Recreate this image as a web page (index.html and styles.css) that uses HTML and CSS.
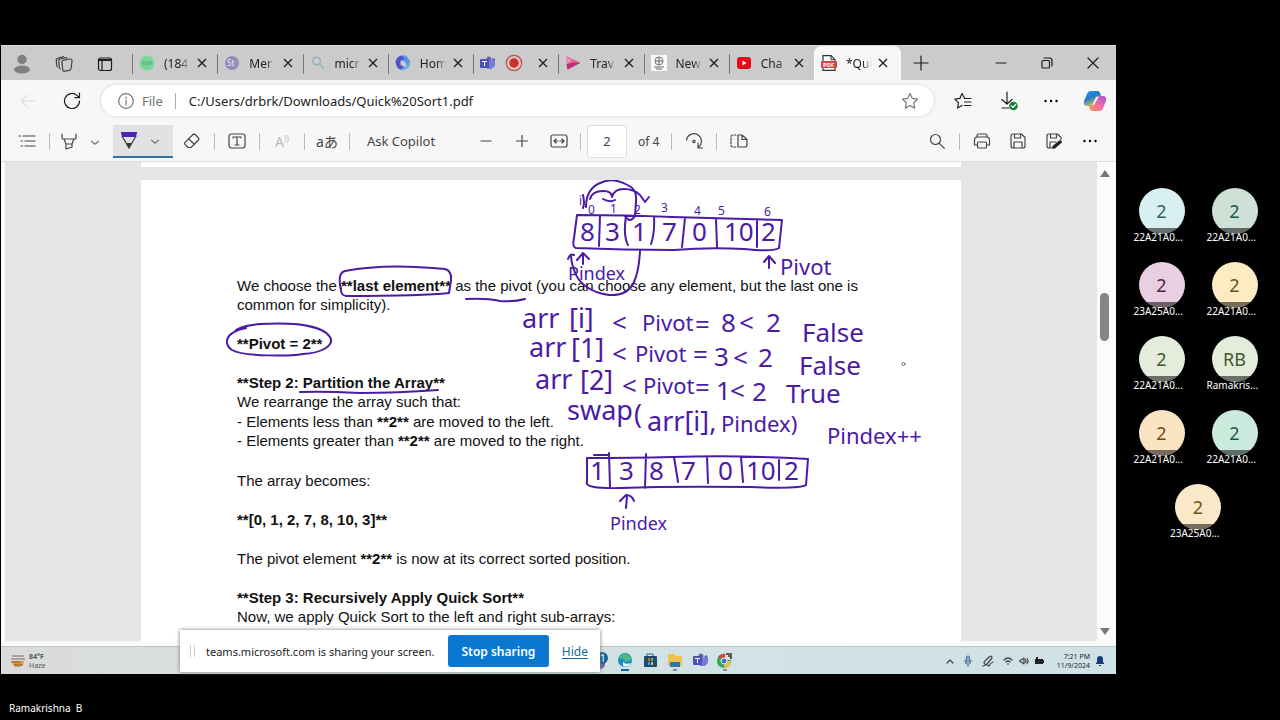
FILE: index.html
```html
<!DOCTYPE html>
<html lang="en">
<head>
<meta charset="utf-8">
<title>Quick Sort1.pdf</title>
<link rel="stylesheet" href="styles.css">
</head>
<body>
<svg class="symbols" aria-hidden="true"><symbol id="x" viewBox="0 0 10 10"><path d="m1 1 8 8M9 1 1 9"/></symbol></svg>
<div class="meeting">
<main class="browser">
  <header class="tabs">
    <div class="tabs-lead">
      <svg class="icon" width="18" height="20" viewBox="0 0 18 20"><circle cx="9" cy="5.500" r="4.700" fill="#808080"/><ellipse cx="9" cy="15.500" rx="8" ry="4" fill="#808080"/></svg>
      <svg class="icon line" width="18" height="18" viewBox="0 0 18 18"><path d="M8.500 5.200 15 4q2-.2 2 1.800l-.8 7.500q-.2 1.700-2 2l-4.500.9q-2 .3-2-1.700l-.7-7.300q0-1.700 1.500-2z"/><path d="M5.500 14q-1 0-1.200-1.500L3.800 6q-.2-2 2-2.300L12 2.600M2.500 11.800q-.8-.3-.8-1.500L1.300 5.500q-.2-2 2-2.500L8.500 1.500"/></svg>
      <svg class="icon line dark" width="16" height="16" viewBox="0 0 16 16"><rect x="1.500" y="2" width="13" height="12.500" rx="2"/><path d="M1.500 3.500h13M1.500 4.500h13M5 5v9.500"/></svg>
    </div>
    <nav class="tab-list" aria-label="Open tabs">
      <div class="tab"><svg class="fav" viewBox="0 0 16 16"><circle cx="8" cy="8" r="7.500" fill="#7bd59b"/><path d="M4 6v4m2-4v4m2-4v4m2-4v4m2-4v4" stroke="#55a977" fill="none"/></svg><span>(184</span><button aria-label="Close tab"><svg class="cross"><use href="#x"/></svg></button></div>
      <div class="tab"><svg class="fav" viewBox="0 0 16 16"><circle cx="8" cy="8" r="7" fill="#9689bd"/><text x="3" y="11" font-size="8" fill="#eee">St</text></svg><span>Mer</span><button aria-label="Close tab"><svg class="cross"><use href="#x"/></svg></button></div>
      <div class="tab"><svg class="fav" viewBox="0 0 16 16" fill="none" stroke="#8fb6bf" stroke-width="1.500"><circle cx="6.500" cy="6" r="3.800"/><path d="m9.500 9 4.500 4.500"/></svg><span>micr</span><button aria-label="Close tab"><svg class="cross"><use href="#x"/></svg></button></div>
      <div class="tab"><svg class="fav" viewBox="0 0 16 16"><path d="M6 .500h5q2 2 4 6l-3 5-2-5-5-1z" fill="#5c93e6"/><path d="M6 .500Q1 2 .500 7l1 4q2 4 6 4l2-3-4-2V6q2-2 5-2z" fill="#4f54c4"/><path d="M15 6.500q1 5-3 7-4 3-7 1l6-3 2-4z" fill="#56b6df"/></svg><span>Hom</span><button aria-label="Close tab"><svg class="cross"><use href="#x"/></svg></button></div>
      <div class="tab"><svg class="fav" viewBox="0 0 16 16"><circle cx="9" cy="4" r="2.500" fill="#6264b9"/><circle cx="13.500" cy="5" r="1.700" fill="#6264b9"/><path d="M7 6h8v5l-2 2-2 1H7z" fill="#777add"/><rect y="4" width="9" height="9" rx="1" fill="#4b51b5"/><path d="M2 6.500h5M4.500 6.500V11" stroke="#fff" fill="none"/></svg><svg class="record" viewBox="0 0 18 18"><circle cx="9" cy="9" r="7.700" fill="none" stroke="#d14a40" stroke-width="1.300"/><circle cx="9" cy="9" r="4.700" fill="#cd3025"/></svg><button aria-label="Close tab"><svg class="cross"><use href="#x"/></svg></button></div>
      <div class="tab"><svg class="fav" viewBox="0 0 16 16"><path d="M1 2q0-1 2 0l11 5q2 1 0 2L2 10z" fill="#e0608f"/><path d="M1 2l6 3-5 5z" fill="#e991b4"/><path d="M1.500 9 10 7.500l5 .5-11 6q-2 1-2-1z" fill="#c02f79"/></svg><span>Trav</span><button aria-label="Close tab"><svg class="cross"><use href="#x"/></svg></button></div>
      <div class="tab"><svg class="fav" viewBox="0 0 16 16"><path d="M0 0h16v16H0z" fill="#f8f8f8"/><circle cx="8" cy="6" r="4" fill="none" stroke="#777"/><path d="M4 6h8M8 2v8M3 12h10M5 14h6" stroke="#666" fill="none"/></svg><span>New</span><button aria-label="Close tab"><svg class="cross"><use href="#x"/></svg></button></div>
      <div class="tab"><svg class="fav" viewBox="0 0 16 16"><rect x="1" y="2" width="14" height="12" rx="3" fill="#e90819"/><path d="m6.500 5.500 4 2.500-4 2.500z" fill="#fff"/></svg><span>Cha</span><button aria-label="Close tab"><svg class="cross"><use href="#x"/></svg></button></div>
    </nav>
    <div class="tab active"><svg class="fav" viewBox="0 0 16 16"><path d="M2 .7h8l4 4v10.600H2z" fill="#fff" stroke="#333" stroke-width="1.200"/><path d="M10 .7v4h4" fill="none" stroke="#333"/><rect y="6" width="16" height="7" rx="1" fill="#d84343"/><text x="2" y="11.500" font-size="6" font-weight="700" fill="#fff">PDF</text></svg><span>*Qui</span><button aria-label="Close tab"><svg class="cross"><use href="#x"/></svg></button></div>
    <button class="new-tab" aria-label="New tab"><svg class="icon line dark" width="16" height="16" viewBox="0 0 16 16"><path d="M8 1v14M1 8h14"/></svg></button>
    <div class="window-controls">
      <button aria-label="Minimize"><svg class="icon line dark" width="12" height="12" viewBox="0 0 12 12"><path d="M1 6h10"/></svg></button>
      <button aria-label="Restore"><svg class="icon line dark" width="12" height="12" viewBox="0 0 12 12"><rect x="1" y="3.500" width="7.500" height="7.500" rx="1"/><path d="M3 1h5.500q2.500 0 2.500 2.500V9"/></svg></button>
      <button aria-label="Close"><svg class="icon line dark" width="12" height="12" viewBox="0 0 12 12"><path d="m1 1 10 10M11 1 1 11"/></svg></button>
    </div>
  </header>

  <div class="address-row">
    <button class="back" aria-label="Back"><svg class="icon line faint" width="16" height="14" viewBox="0 0 16 14"><path d="M15 7H2m5-6L1.500 7 7 13"/></svg></button>
    <button class="refresh" aria-label="Refresh"><svg class="icon line dark" width="18" height="18" viewBox="0 0 18 18"><path d="M16.500 9A7.500 7.500 0 1 1 14 3.400l2.500 2.300M16.500 1v4.700H12"/></svg></button>
    <div class="address">
      <svg class="icon line mid" width="16" height="16" viewBox="0 0 16 16"><circle cx="8" cy="8" r="7.300"/><path d="M8 7v5M8 4v1.300"/></svg>
      <label for="url">File</label>
      <input id="url" type="text" value="C:/Users/drbrk/Downloads/Quick%20Sort1.pdf">
      <button aria-label="Add to favorites"><svg class="icon line mid" width="18" height="18" viewBox="0 0 18 18"><path d="m9 1.500 2.300 4.900 5.300.7-3.900 3.700 1 5.300L9 13.500l-4.700 2.600 1-5.300-3.900-3.700 5.300-.7z"/></svg></button>
    </div>
    <button class="fav-list" aria-label="Favorites"><svg class="icon line dark" width="18" height="18" viewBox="0 0 18 18"><path d="M10.500 6 8 1.500 5.800 6.400.8 7.100l3.700 3.700-1 5.300L8 13.500M10.500 6.500H17M10.500 10H17M10.500 13.500H17"/></svg></button>
    <button class="download" aria-label="Downloads"><svg class="icon line dark" width="18" height="20" viewBox="0 0 18 20"><path d="M7 1v12M2 8.500 7 13l5-4.500M2 17h7"/><circle cx="13.500" cy="15" r="4.300" fill="#17803d" stroke="none"/><path d="m11.500 15 1.500 1.500 2.700-3" stroke="#fff"/></svg></button>
    <button class="menu" aria-label="Settings and more"><svg class="icon" width="16" height="6" viewBox="0 0 16 6"><circle cx="2.500" cy="3" r="1.200"/><circle cx="8" cy="3" r="1.200"/><circle cx="13.500" cy="3" r="1.200"/></svg></button>
    <button class="copilot" aria-label="Copilot"><svg class="icon" width="24" height="22" viewBox="0 0 24 22"><defs><linearGradient id="cool" x2=".5" y2="1"><stop stop-color="#169bd7"/><stop offset=".5" stop-color="#2679cc"/><stop offset="1" stop-color="#c5d54c"/></linearGradient><linearGradient id="warm" x1="1" x2="0" y2="1"><stop stop-color="#9b59de"/><stop offset=".5" stop-color="#f06ba5"/><stop offset="1" stop-color="#f69a4d"/></linearGradient></defs><path d="M8 1h7q2 0 3 5l-5 1-4 9H4q-4 0-3-5l3-7q1-3 4-3z" fill="url(#cool)"/><path d="M16 6h4q4 0 3 5l-3 7q-1 3-4 3H9q-2 0-3-5l5-1z" fill="url(#warm)"/></svg></button>
  </div>

  <div class="toolbar" role="toolbar" aria-label="PDF tools">
    <button class="w44 contents" aria-label="Contents"><svg class="icon line" width="18" height="14" viewBox="0 0 18 14"><path d="M5 2h12M7 7h10M7 12h10M1 2h1.500M3 7h1.500M3 12h1.500"/></svg></button>
    <i class="sep"></i>
    <button class="w38" aria-label="Highlight"><svg class="icon line" width="16" height="18" viewBox="0 0 16 18"><path d="M1 2v4q0 1 1 1h12q1 0 1-1V2M3 7l2 5h6l2-5M5 12v5l6-2v-3"/></svg></button>
    <button class="chevron solo" aria-label="Highlight options"><svg class="icon line mid" width="8" height="6" viewBox="0 0 8 6"><path d="m.5 1.200 3.500 3 3.500-3"/></svg></button>
    <div class="draw-group">
      <button aria-label="Draw"><svg class="icon" width="18" height="18" viewBox="0 0 18 18"><path d="M1 2h16M2 5l7 12 7-12" fill="none" stroke="#444" stroke-width="1.300"/><path d="M1 1h16l-1 5H2z" fill="#5520b5"/><path d="m6.500 12 2.500 5 2.500-5z" fill="#333"/></svg></button>
      <button class="chevron" aria-label="Draw options"><svg class="icon line mid" width="8" height="6" viewBox="0 0 8 6"><path d="m.5 1.200 3.500 3 3.500-3"/></svg></button>
    </div>
    <button class="w38 erase" aria-label="Erase"><svg class="icon line" width="18" height="18" viewBox="0 0 18 18"><path d="M10 2.500q1-1 2 0L15.500 6q1 1 0 2L8 15.500H5L2 12.300q-1-1 0-2zM5.500 6.800l6 5.500M5 15.500h3"/></svg></button>
    <i class="sep"></i>
    <button class="w44" aria-label="Add text"><svg class="icon line" width="18" height="16" viewBox="0 0 18 16"><rect x="1" y="1" width="16" height="14" rx="2.500"/><path d="M5 5V4h8v1M9 4v8M7 12h4"/></svg></button>
    <i class="sep"></i>
    <button class="w44 disabled-text" aria-label="Read aloud">A<sup>))</sup></button>
    <i class="sep"></i>
    <button class="w44 translate" aria-label="Translate">aあ</button>
    <i class="sep"></i>
    <button class="ask">Ask Copilot</button>
    <button class="w40" aria-label="Zoom out"><svg class="icon line" width="12" height="12" viewBox="0 0 12 12"><path d="M1 6h10"/></svg></button>
    <button class="w32" aria-label="Zoom in"><svg class="icon line" width="12" height="12" viewBox="0 0 12 12"><path d="M0 6h12M6 0v12"/></svg></button>
    <button class="w42" aria-label="Fit to width"><svg class="icon line" width="18" height="14" viewBox="0 0 18 14"><rect x="1" y="1" width="16" height="12" rx="2"/><path d="M4 7h4M10 7h4M6 5 4 7l2 2M12 5l2 2-2 2"/></svg></button>
    <i class="sep"></i>
    <input id="page" class="page-number" type="text" value="2">
    <label class="page-total" for="page">of 4</label>
    <i class="sep"></i>
    <button class="w44" aria-label="Rotate"><svg class="icon line" width="18" height="18" viewBox="0 0 18 18"><path d="M1.500 8a7.500 7.500 0 1 1 11.500 7.500M13 11v5h4.500"/><circle cx="9" cy="9.500" r="1.200"/></svg></button>
    <i class="sep"></i>
    <button class="w44" aria-label="Page view"><svg class="icon line" width="18" height="14" viewBox="0 0 18 14"><path d="M6 1H3q-2 0-2 2v8q0 2 2 2h3" stroke-dasharray="2 1.500"/><path d="M8 1h4l5 4.500V11q0 2-2 2H8zM12 1v4.500h5"/></svg></button>
    <span class="spacer"></span>
    <button class="w44" aria-label="Search"><svg class="icon line" width="16" height="16" viewBox="0 0 16 16"><circle cx="6.500" cy="6.500" r="5"/><path d="m10.300 10.300 5 5"/></svg></button>
    <i class="sep"></i>
    <button class="w44" aria-label="Print"><svg class="icon line" width="18" height="16" viewBox="0 0 18 16"><path d="M4 4V3q0-2 2-2h6q2 0 2 2v1M4 12H1.500V7q0-3 3-3h9q3 0 3 3v5H14"/><rect x="4.500" y="9" width="9" height="6" rx="1"/></svg></button>
    <button class="w28" aria-label="Save"><svg class="icon line" width="16" height="16" viewBox="0 0 16 16"><path d="M3 1h8.500L15 4.500V13q0 2-2 2H3q-2 0-2-2V3q0-2 2-2zM4.500 1v4h6V1M4 15V9h8v6"/></svg></button>
    <button class="w44" aria-label="Save as"><svg class="icon line" width="16" height="16" viewBox="0 0 16 16"><path d="M7 15H3q-2 0-2-2V3q0-2 2-2h8.500L15 4.500V7M4.500 1v4h6V1M4 15V9h6"/><path d="m8 14 6-5" stroke="#222" stroke-width="3.500"/></svg></button>
    <button class="w28 more" aria-label="More"><svg class="icon" width="16" height="6" viewBox="0 0 16 6"><circle cx="2.500" cy="3" r="1.200"/><circle cx="8" cy="3" r="1.200"/><circle cx="13.500" cy="3" r="1.200"/></svg></button>
  </div>

  <section class="viewer">
    <div class="canvas">
      <div class="previous-page"></div>
      <article class="page">
        <p>We choose the <b>**last element**</b> as the pivot (you can choose any element, but the last one is common for simplicity).</p>
        <p><b>**Pivot = 2**</b></p>
        <div class="step">
          <h2>**Step 2: Partition the Array**</h2>
          <p>We rearrange the array such that:</p>
          <ul><li>- Elements less than <b>**2**</b> are moved to the left.</li><li>- Elements greater than <b>**2**</b> are moved to the right.</li></ul>
        </div>
        <p>The array becomes:</p>
        <p><b>**[0, 1, 2, 7, 8, 10, 3]**</b></p>
        <p>The pivot element <b>**2**</b> is now at its correct sorted position.</p>
        <div class="step">
          <h2>**Step 3: Recursively Apply Quick Sort**</h2>
          <p>Now, we apply Quick Sort to the left and right sub-arrays:</p>
        </div>
        <svg class="ink" width="820" height="461" viewBox="141 180 820 461">
          <g class="strokes">
            <path d="M341 290q-4-17 4-19 40-8 100-2 7 2 6 11l-2 13q-25 3-103 3-6-1-5-8z"/>
            <path d="M466 299q21-1 34 2 15 1 25-2"/>
            <path d="M246 328c-24 5-21 17-14 22 12 7 59 6 71 4 18-1 32-8 27-17-6-10-30-15-69-13-12 1-19 2-25 6"/>
            <path d="M300 392q22-1 60 1 38 0 78-3"/>
            <path d="M577 215q50 0 95 2l110 3-3 28q-5 4-35 1-35-2-70 1-50 0-98-2-4-1-2-10zM600 216l-1 30M626 216q-3 20 2 29M654 217q1 15-3 27M685 218l-3 29M716 219l1 28M757 220v27"/>
            <path d="M586 207q0-18 14-24 14-7 31 4 6 4 5 15l-1 14q-5 8-10 0M590 199q2-8 13-8 9 0 9 6 2-8 12-8 10 0 16 6l5 7 4-5M603 199q7 4 12 1M583 195q2 9 0 13"/>
            <path d="M640 251q-1 20-6 31-6 14-25 13-28-4-35-25-3-9-3-15M568 259q2-6 6-4M577 260l6-7 6 6M583 254v10M764 262l5-6 6 7M769 257v11"/>
            <path d="M587 458q45 0 85-1 70-2 136 2l-2 26q-5 4-55 2-80-1-130 1-37 1-34-6zM594 455h15M609 453l1 34M646 454l-1 34M674 457l4 25M707 457l1 26M741 457l2 25M779 460v20"/>
            <path d="M620 501l6-6q6 0 8 6M627 496l-1 12"/>
            <circle class="cursor" cx="903.500" cy="364" r="1.500"/>
          </g>
          <g class="small"><text x="579" y="205">i</text><text x="588" y="214">0</text><text x="610" y="213">1</text><text x="634" y="214">2</text><text x="661" y="212">3</text><text x="694" y="215">4</text><text x="718" y="215">5</text><text x="764" y="216">6</text></g>
          <g class="digits"><text x="580" y="241">8</text><text x="605" y="241">3</text><text x="632" y="241">1</text><text x="662" y="241">7</text><text x="692" y="241">0</text><text x="724" y="241">10</text><text x="761" y="241">2</text><text x="590" y="480">1</text><text x="619" y="480">3</text><text x="649" y="480">8</text><text x="681" y="480">7</text><text x="718" y="480">0</text><text x="746" y="480">10</text><text x="784" y="480">2</text></g>
          <g class="note"><text x="568" y="280">Pindex</text><text x="610" y="530">Pindex</text></g>
          <g class="big">
            <text x="522" y="328">arr</text><text x="569" y="328">[i]</text>
            <text x="529" y="357">arr</text><text x="571" y="358">[1]</text>
            <text x="535" y="389">arr</text><text x="580" y="390">[2]</text>
            <text x="567" y="420">swap</text><text x="634" y="424">(</text><text x="647" y="431">arr[i],</text>
          </g>
          <g class="medium">
            <text x="612" y="332">&lt;</text><text x="695" y="334">=</text><text x="721" y="332">8</text><text x="739" y="332">&lt;</text><text x="766" y="332">2</text><text x="802" y="342">False</text>
            <text x="612" y="363">&lt;</text><text x="693" y="364">=</text><text x="714" y="366">3</text><text x="733" y="367">&lt;</text><text x="758" y="367">2</text><text x="799" y="375">False</text>
            <text x="622" y="395">&lt;</text><text x="695" y="397">=</text><text x="716" y="400">1</text><text x="730" y="400">&lt;</text><text x="752" y="401">2</text><text x="786" y="403">True</text>
          </g>
          <g class="words">
            <text x="780" y="275">Pivot</text>
            <text x="642" y="331">Pivot</text>
            <text x="635" y="362">Pivot</text>
            <text x="643" y="394">Pivot</text>
            <text x="721" y="432">Pindex)</text>
            <text x="827" y="444">Pindex++</text>
          </g>
        </svg>
      </article>
    </div>
    <div class="scrollbar"><span class="up"></span><span class="thumb"></span><span class="down"></span></div>
  </section>

  <footer class="taskbar">
    <div class="weather">
      <svg class="icon" width="16" height="14" viewBox="0 0 16 14"><path d="M2 2h12M1 5h14" stroke="#9a9280" stroke-width="1.500"/><path d="M2 7h12q-1 6-7 6-4 0-5-6z" fill="#d9953a"/><path d="M1 8h9M4 11h9" stroke="#8b6330"/></svg>
      <div><b>84°F</b><span>Haze</span></div>
    </div>
    <div class="apps">
      <svg viewBox="0 0 18 20"><circle cx="9" cy="13" r="5" fill="#765da7"/><circle cx="11" cy="7" r="6" fill="#156399"/><text x="9" y="11" font-size="10" fill="#fff">1</text></svg>
      <svg viewBox="0 0 18 20"><circle cx="9" cy="9" r="7" fill="#178bc9"/><path d="M3 6q6-7 12 0 2 4-6 5-1-5-5-3z" fill="#45b986"/><path d="M7 10q1 4 8 2-3 5-8 3z" fill="#e7f5f7"/><path d="M5 19h8" stroke="#0a66b8" stroke-width="2"/></svg>
      <svg viewBox="0 0 18 20"><path d="M6 5V3h6v2" fill="none" stroke="#29658d"/><rect x="3" y="5" width="13" height="11" rx="1" fill="#1d4b6b"/><path d="M7 7h2v3H7z" fill="#c86838"/><path d="M10 7h2v3h-2z" fill="#85b945"/><path d="M7 11h2v3H7z" fill="#45a7d9"/><path d="M10 11h2v3h-2z" fill="#e1bd41"/></svg>
      <svg viewBox="0 0 18 20"><path d="M2 3h6l2 2h6v10H2z" fill="#efc34b"/><path d="M4 11h10v5H4z" fill="#2679ae"/><path d="M7 19h4" stroke="#67747a" stroke-width="1.500"/></svg>
      <svg viewBox="0 0 18 20"><circle cx="10" cy="5" r="2.500" fill="#6264b9"/><circle cx="15" cy="6" r="1.700" fill="#6264b9"/><path d="M9 7h8v5l-3 3H9z" fill="#777add"/><rect x="2" y="5" width="9" height="9" rx="1" fill="#4b51b5"/><path d="M4 7.500h5M6.500 7.500V12" stroke="#fff"/></svg>
      <svg viewBox="0 0 18 20"><circle cx="8" cy="10" r="7" fill="#36a456"/><path d="M2 6Q5 2 10 3l2 5H7z" fill="#d4493d"/><path d="M9 10h6q0 7-7 7z" fill="#ecc044"/><circle cx="8" cy="10" r="3" fill="#3478d2" stroke="#fff"/><circle cx="13" cy="5" r="4" fill="#ddd"/><path d="M10 3h6M12 5h3v3" stroke="#333" stroke-width="1.500"/><path d="M7 19h4" stroke="#67747a" stroke-width="1.500"/></svg>
    </div>
    <div class="tray">
      <svg class="icon line" width="8" height="6" viewBox="0 0 8 6"><path d="m1 5 3-3 3 3"/></svg>
      <svg class="icon line" width="8" height="12" viewBox="0 0 8 12"><rect x="2.500" y="1" width="3" height="6" rx="1.500" fill="#8cb6dc" stroke="#54749b"/><path d="M1 5q0 4 3 4t3-4M4 9v2" stroke="#54749b"/></svg>
      <svg class="icon line" width="12" height="12" viewBox="0 0 12 12"><path d="M2 7 7 2q3-2 3 1L5 9Q2 10 2 7zM1 11q4-2 6 0 1-3 4-4"/></svg>
      <svg class="icon line" width="10" height="8" viewBox="0 0 10 8"><path d="M1 3q4-4 8 0M3 5q2-2 4 0M5 6.500v1"/></svg>
      <svg class="icon line" width="10" height="8" viewBox="0 0 10 8"><path d="M1 3h1.500L5 1v6L2.500 5H1zM6.500 2.500q1 1.500 0 3M8 1.500q2 2.500 0 5"/></svg>
      <svg class="icon" width="10" height="8" viewBox="0 0 10 8"><path d="M0 2h8v1h1v3H8v1H0zM1 0h2v2H1z" fill="#222"/></svg>
      <time>7:21 PM<br>11/9/2024</time>
      <svg class="icon" width="8" height="10" viewBox="0 0 8 10"><path d="M0 8V7l1-1V3q0-3 3-3t3 3v3l1 1v1zM3 9h2v1H3z" fill="#173b7b"/></svg>
    </div>
  </footer>

  <div class="share-bar">
    <span class="grip"></span>
    <span class="share-text">teams.microsoft.com is sharing your screen.</span>
    <button>Stop sharing</button>
    <a href="#">Hide</a>
  </div>
</main>

<aside class="people" aria-label="Participants">
  <div class="person"><div class="avatar cyan">2</div><span>22A21A0...</span></div>
  <div class="person"><div class="avatar sage">2</div><span>22A21A0...</span></div>
  <div class="person"><div class="avatar pink">2</div><span>23A25A0...</span></div>
  <div class="person"><div class="avatar yellow">2</div><span>22A21A0...</span></div>
  <div class="person"><div class="avatar green">2</div><span>22A21A0...</span></div>
  <div class="person"><div class="avatar green">RB</div><span>Ramakris...</span></div>
  <div class="person"><div class="avatar peach">2</div><span>22A21A0...</span></div>
  <div class="person"><div class="avatar mint">2</div><span>22A21A0...</span></div>
  <div class="person"><div class="avatar cream">2</div><span>23A25A0...</span></div>
</aside>
<div class="presenter">Ramakrishna&nbsp; B</div>
</div>
</body>
</html>
```
FILE: styles.css
```css
* { box-sizing: border-box; }
body { margin: 0; background: #000; color: #222; font-family: "Noto Sans", "Noto Sans CJK JP", sans-serif; font-size: 13px; }
button { display: flex; align-items: center; justify-content: center; padding: 0; border: 0; background: none; color: inherit; font: inherit; flex: none; }
input { font: inherit; color: inherit; border: 0; outline: 0; min-width: 0; }
.symbols { display: none; }
.meeting { display: grid; grid-template: 45px minmax(0, 1fr) 46px / minmax(0, 1fr) 164px; height: 100vh; }
.browser { grid-area: 2 / 1; position: relative; display: grid; grid-template-rows: 35px 41px 41px minmax(0, 1fr) 28px; min-height: 0; margin-left: 1px; background: #f8f7f8; }
.icon { display: block; flex: none; }
.line { fill: none; stroke: #454545; stroke-width: 1.2; stroke-linecap: round; stroke-linejoin: round; }
.dark { stroke: #1f1f1f; }
.mid { stroke: #777; }
.faint { stroke: #ddd; }

.tabs { display: flex; align-items: stretch; background: #cbcbcb; border-top: 1px solid #d9d9d9; }
.tabs-lead { display: flex; align-items: center; gap: 24px; width: 131px; padding: 2px 0 0 12px; flex: none; }
.tab-list { display: grid; grid-template-columns: repeat(8, 1fr); width: 682px; flex: none; }
.tab { display: flex; align-items: center; padding: 0 8px 0 7px; background: linear-gradient(#777, #777) 0 60% / 1px 20px no-repeat; font-size: 12px; }
.tab span { width: 26px; margin-left: 9px; overflow: hidden; white-space: nowrap; mask-image: linear-gradient(90deg, #000 65%, transparent); }
.tab button { margin-left: auto; width: 14px; }
.cross { width: 10px; height: 10px; fill: none; stroke: #222; stroke-width: 1.4; }
.fav { width: 16px; height: 16px; flex: none; }
.record { width: 18px; height: 18px; margin-left: 9px; }
.active { width: 87px; flex: none; background: #f8f7f8; border-radius: 7px 7px 0 0; padding-right: 11px; }
.new-tab { width: 40px; }
.window-controls { display: flex; margin-left: auto; }
.window-controls button { width: 46px; }

.address-row { display: flex; align-items: center; }
.back { width: 50px; padding-left: 4px; }
.refresh { width: 42px; }
.address { flex: 1; display: flex; align-items: center; height: 31px; margin-left: 8px; padding: 0 15px 0 17px; border-radius: 16px; background: #fff; box-shadow: 0 0 3px #ccc; }
.address label { padding: 0 12px 0 8px; color: #707070; border-right: 1px solid #aaa; line-height: 16px; }
.address input { flex: 1; padding: 0 13px; background: none; font-size: 13px; }
.fav-list { width: 58px; }
.download { width: 34px; }
.menu { width: 50px; }
.copilot { width: 37px; margin-right: 3px; }

.toolbar { display: flex; align-items: center; border-bottom: 1px solid #ddd; color: #444; }
.sep { width: 1px; height: 17px; background: #bbb; flex: none; }
.w28 { width: 28px; }
.w32 { width: 32px; }
.w38 { width: 38px; }
.w40 { width: 40px; }
.w42 { width: 42px; }
.w44 { width: 44px; }
.contents { margin-left: 4px; }
.chevron { width: 20px; padding-top: 3px; }
.solo { width: 14px; margin-right: 11px; }
.draw-group { display: flex; align-items: center; width: 60px; height: 33px; background: #e2e2e3; border-bottom: 2px solid #2f72ae; flex: none; }
.draw-group button:first-child { width: 32px; }
.erase { margin-right: 3px; }
.disabled-text { color: #bbb; font-size: 14px; }
.disabled-text sup { font-size: 8px; line-height: 14px; align-self: flex-start; }
.translate { font-size: 14px; }
.ask { width: 102px; margin-right: 14px; }
.page-number { width: 40px; height: 33px; margin-left: 6px; flex: none; text-align: center; background: #fff; border: 1px solid #ddd; border-radius: 3px; }
.page-total { width: 44px; padding-left: 11px; flex: none; font-size: 12px; }
.spacer { flex: 1; }
.more { margin-right: 12px; }

.viewer { display: flex; min-height: 0; padding: 0 4px 5px; overflow: hidden; background: #fcfbfc; }
.canvas { flex: 1; display: grid; grid-template: 5px minmax(0, 1fr) / 820px; gap: 13px; justify-content: center; overflow: hidden; background: #e7e4e7; }
.previous-page { background: #fff; }
.page { position: relative; min-height: 0; overflow: hidden; padding: 96px 96px 0; background: #fff; color: #111; font: 15px/19px "Liberation Sans", Arial, sans-serif; }
.page p, .page h2, .page ul { margin: 0; padding: 0; list-style: none; font-size: 15px; }
.page > p + p, .page > .step, .page > .step + p { margin-top: 20px; }
.page ul { padding: 1px 0; }
.ink { position: absolute; top: 0; left: 0; fill: #4b1ba5; font-family: "Noto Sans", sans-serif; }
.strokes { fill: none; stroke: #4b1ba5; stroke-width: 2; stroke-linecap: round; stroke-linejoin: round; }
.cursor { stroke: #777; stroke-width: 1; }
.small { font-size: 12px; }
.digits, .medium { font-size: 26px; }
.big { font-size: 27px; }
.words { font-size: 22px; }
.note { font-size: 18px; }
.scrollbar { display: flex; flex-direction: column; align-items: center; width: 15px; padding: 8px 0 6px; background: #fcfbfc; }
.up, .down { border: 5px solid transparent; }
.up { border-top: 0; border-bottom: 7px solid #777; }
.down { border-bottom: 0; border-top: 7px solid #777; margin-top: auto; }
.thumb { width: 9px; height: 48px; margin-top: 116px; border-radius: 5px; background: #858585; }

.taskbar { display: flex; align-items: center; background: linear-gradient(90deg, #dbdbdb, #d3e2e4 45%, #d0e2e7); border-top: 1px solid #bbc4c6; }
.weather { display: flex; align-items: center; gap: 3px; width: 100px; padding-left: 9px; font-size: 7px; line-height: 9px; color: #555; }
.weather b, .weather span { display: block; }
.apps { display: flex; gap: 7px; margin-left: 490px; }
.apps svg { width: 18px; height: 20px; fill: none; }
.tray { display: flex; align-items: center; gap: 6px; margin-left: auto; padding-right: 12px; }
.tray > svg:nth-child(-n+3) { margin: 0 3px 0 1px; }
.tray time { text-align: right; font-size: 7px; line-height: 9px; margin-left: 6px; }

.share-bar { position: absolute; left: 179px; bottom: 2px; width: 420px; height: 42px; display: flex; align-items: center; background: #fff; box-shadow: 0 0 4px #777; font-size: 12px; white-space: nowrap; }
.grip { width: 5px; height: 12px; margin: 0 11px 0 10px; border: solid #ccc; border-width: 0 1px; flex: none; }
.share-text { font-size: 11px; }
.share-bar button { width: 101px; height: 32px; margin-left: auto; border-radius: 3px; background: #0a78d1; color: #fff; font-weight: 600; }
.share-bar a { margin: 0 12px 0 13px; color: #196a9b; text-underline-offset: 2px; }

.people { grid-area: 1 / 2 / 4 / 3; display: flex; flex-wrap: wrap; align-content: flex-start; justify-content: center; gap: 18px 17px; padding-top: 188px; color: #fff; }
.person { width: 56px; height: 56px; font-size: 10px; line-height: 12px; white-space: nowrap; }
.person span { display: block; margin-top: -3px; position: relative; }
.avatar { position: relative; display: grid; place-items: center; width: 46px; height: 46px; margin: 0 auto; border-radius: 50%; overflow: hidden; font-size: 18px; }
.avatar::after { content: ""; position: absolute; inset: 40px 0 0; background: #0008; }
.cyan { background: #d8f0f2; color: #316167; }
.sage { background: #cfe0d7; color: #24534a; }
.pink { background: #e8cfe2; color: #54234d; }
.yellow { background: #fdebc3; color: #69531b; }
.green { background: #e4eddc; color: #40592f; }
.peach { background: #fbe4c3; color: #6c4e14; }
.mint { background: #c9eadc; color: #20574a; }
.cream { background: #f9e9c9; color: #6c541c; }
.presenter { grid-area: 3 / 1; padding: 27px 0 0 9px; color: #fff; font-size: 10px; line-height: 14px; }
```
